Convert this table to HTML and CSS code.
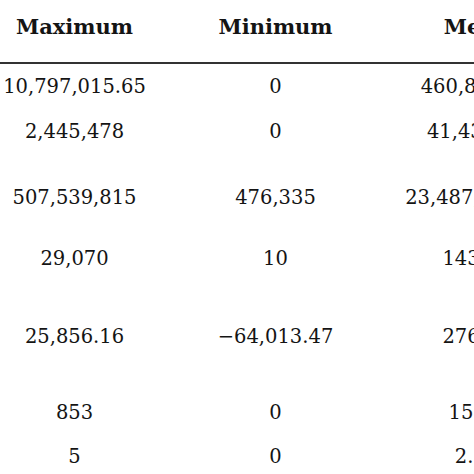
FILE: index.html
```html
<!DOCTYPE html>
<html>
<head>
<meta charset="utf-8">
<link rel="stylesheet" href="styles.css">
</head>
<body>
<div class="stats">
  <div class="cell head">Maximum</div>
  <div class="cell head">Minimum</div>
  <div class="cell head">Mean</div>

  <div class="cell r1">10,797,015.65</div>
  <div class="cell r1">0</div>
  <div class="cell r1">460,866.25</div>

  <div class="cell r2">2,445,478</div>
  <div class="cell r2">0</div>
  <div class="cell r2">41,437.72</div>

  <div class="cell r3">507,539,815</div>
  <div class="cell r3">476,335</div>
  <div class="cell r3">23,487,326.52</div>

  <div class="cell r4">29,070</div>
  <div class="cell r4">10</div>
  <div class="cell r4">143.18</div>

  <div class="cell r5">25,856.16</div>
  <div class="cell r5">&minus;64,013.47</div>
  <div class="cell r5">276.53</div>

  <div class="cell r6">853</div>
  <div class="cell r6">0</div>
  <div class="cell r6">15.36</div>

  <div class="cell r7">5</div>
  <div class="cell r7">0</div>
  <div class="cell r7">2.14</div>
</div>
</body>
</html>
```
FILE: styles.css
```css
html, body {
  margin: 0;
  padding: 0;
  background: #ffffff;
  overflow: hidden;
}
body {
  width: 474px;
  height: 474px;
}
.stats {
  display: grid;
  grid-template-columns: repeat(3, 201px);
  grid-template-rows: 64px 45px 44px 88px 34px 122px 30px 58px;
  margin-left: -26px;
  font-family: "DejaVu Serif", "Liberation Serif", serif;
  font-size: 19.5px;
  color: #141414;
}
.cell {
  display: flex;
  align-items: center;
  justify-content: center;
  white-space: nowrap;
}
.head {
  font-weight: bold;
  font-size: 21px;
  align-items: flex-start;
  padding-top: 14px;
  border-bottom: 2px solid #333333;
  box-sizing: border-box;
}
```
